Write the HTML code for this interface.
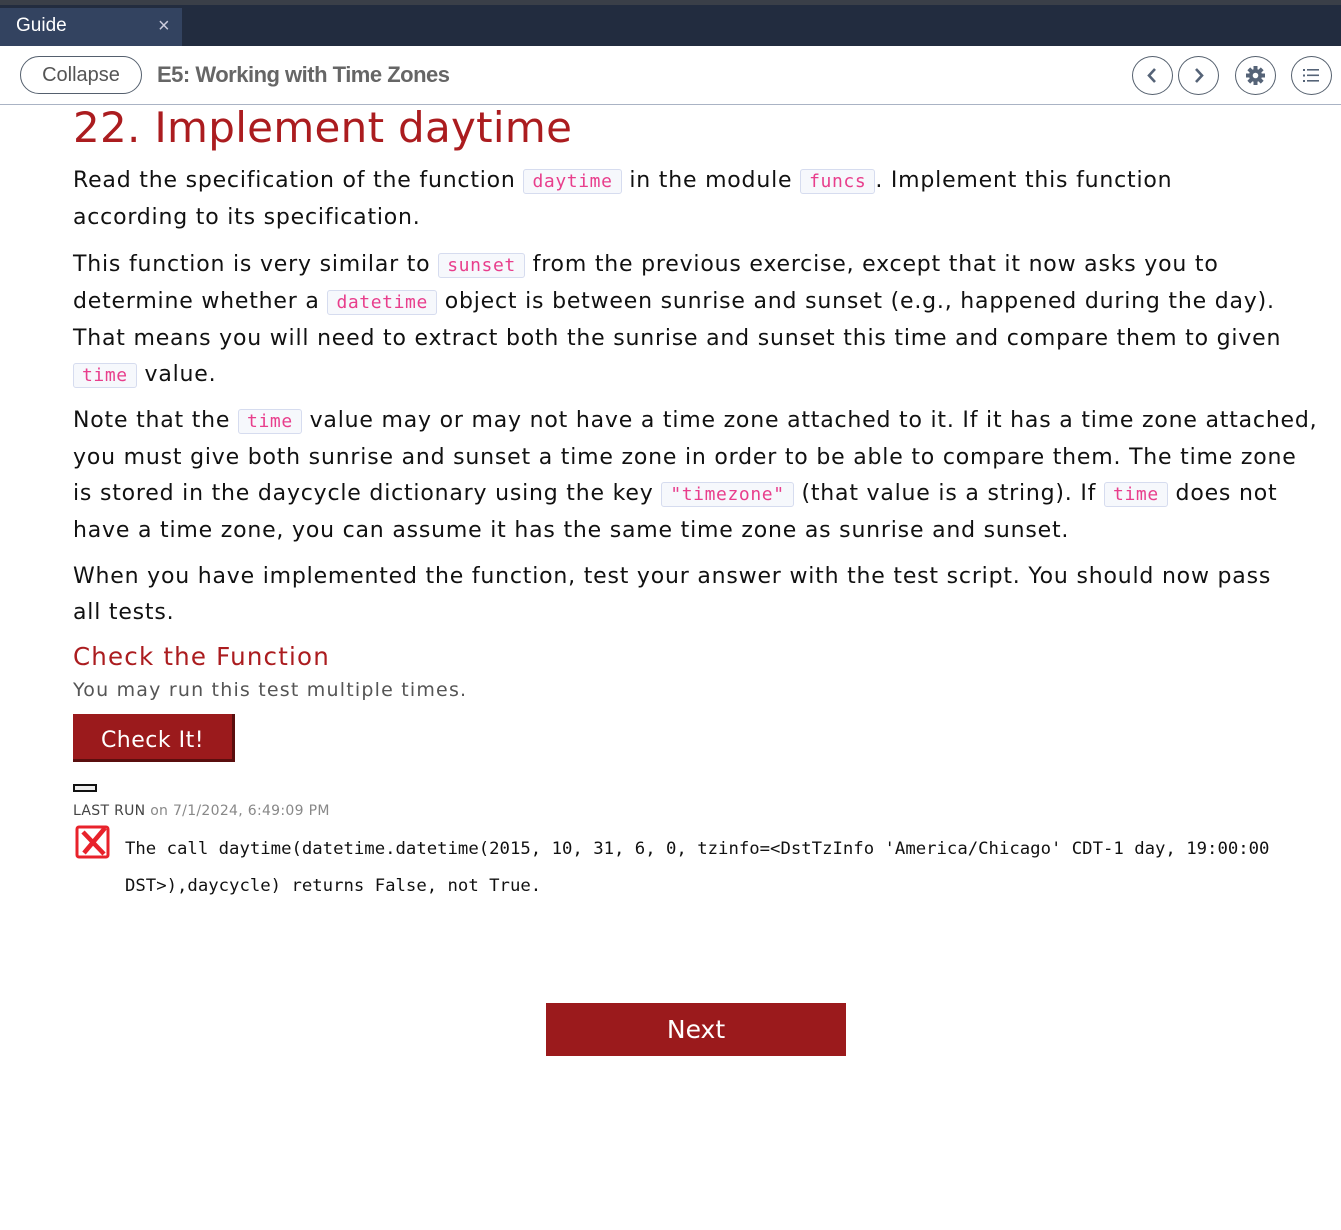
<!DOCTYPE html>
<html><head><meta charset="utf-8"><style>
body{margin:0;width:1341px;height:1230px;background:#fff;position:relative;overflow:hidden;font-family:"DejaVu Sans","Liberation Sans",sans-serif;color:#111}
.top{position:absolute;left:0;top:0;width:1341px;height:46px;background:#222c3f;border-top:5px solid #3a3f48;box-sizing:border-box}
.tab{position:absolute;left:0;top:8px;width:182px;height:38px;background:#334360;color:#fff;font-family:"Liberation Sans",sans-serif;font-size:19px;line-height:36px}
.tab span{position:absolute;left:16px}.tab b{position:absolute;left:158px;font-weight:normal;color:#ccd;font-size:20px}
.hdr{position:absolute;left:0;top:46px;width:1341px;height:58px;border-bottom:1px solid #aab3c4}
.col{position:absolute;left:20px;top:10px;width:120px;height:36px;border:1px solid #55606e;border-radius:19px;font-family:"Liberation Sans",sans-serif;font-size:20px;color:#555;text-align:center;line-height:36px}
.ttl{position:absolute;left:157px;top:16px;font-family:"Liberation Sans",sans-serif;font-weight:bold;font-size:22px;color:#666;letter-spacing:-0.5px}
.cb{position:absolute;top:10px;width:39px;height:37px;border:1px solid #55606e;border-radius:50%}
.cb svg{position:absolute;left:9px;top:8px}
h1{position:absolute;left:73px;top:103px;margin:0;font-weight:normal;font-size:42px;color:#ab1c1f;letter-spacing:0.3px}
.p{position:absolute;left:73px;font-size:22px;letter-spacing:0.8px;line-height:36px;white-space:nowrap;color:#111}
code{font-family:"DejaVu Sans Mono","Liberation Mono",monospace;font-size:18px;letter-spacing:0.6px;color:#e83e8c;background:#f6f8fc;border:1px solid #d6dcef;border-radius:3px;padding:1px 8px}
h2{position:absolute;left:73px;top:642px;margin:0;font-weight:normal;font-size:24.5px;letter-spacing:1.2px;color:#ab1c1f}
.sub{position:absolute;left:73px;top:679px;font-size:19px;letter-spacing:1.2px;color:#555}
.btn{position:absolute;left:73px;top:714px;width:159px;height:45px;background:#9b1a1c;border-right:3px solid #5a0e0e;border-bottom:3px solid #5a0e0e;color:#fff;font-size:22px;letter-spacing:0.5px;text-align:center;line-height:54px}
.bar{position:absolute;left:73px;top:784px;width:20px;height:4px;border:2px solid #111;background:#eee}
.lr{position:absolute;left:73px;top:803px;font-size:14px;letter-spacing:0.3px;color:#888}.lr span{color:#444}
.mono{position:absolute;left:125px;font-family:"DejaVu Sans Mono","Liberation Mono",monospace;font-size:17.3px;color:#111;white-space:nowrap}
.next{position:absolute;left:546px;top:1003px;width:300px;height:53px;background:#9b1a1c;color:#fff;font-size:25px;text-align:center;line-height:53px}
</style></head><body>
<div class="top"></div>
<div class="tab"><span>Guide</span><b>×</b></div>
<div class="hdr">
<div class="col">Collapse</div>
<div class="ttl">E5: Working with Time Zones</div>
<div class="cb" style="left:1132px"><svg width="21" height="21" viewBox="0 0 21 21"><path d="M13 4 L7 10.5 L13 17" stroke="#556377" stroke-width="2.6" fill="none"/></svg></div>
<div class="cb" style="left:1178px"><svg width="21" height="21" viewBox="0 0 21 21"><path d="M8 4 L14 10.5 L8 17" stroke="#556377" stroke-width="2.6" fill="none"/></svg></div>
<div class="cb" style="left:1235px"><svg width="21" height="21" viewBox="0 0 21 21"><g fill="#556377"><circle cx="10.5" cy="10.5" r="6.5"/><rect x="8.5" y="1" width="4" height="19"/><rect x="1" y="8.5" width="19" height="4"/><rect x="8.5" y="1" width="4" height="19" transform="rotate(45 10.5 10.5)"/><rect x="8.5" y="1" width="4" height="19" transform="rotate(-45 10.5 10.5)"/></g><circle cx="10.5" cy="10.5" r="2.8" fill="#fff"/></svg></div>
<div class="cb" style="left:1291px"><svg width="21" height="21" viewBox="0 0 21 21"><g fill="#556377"><rect x="2" y="4" width="2" height="2"/><rect x="2" y="9.5" width="2" height="2"/><rect x="2" y="15" width="2" height="2"/><rect x="6" y="4" width="12" height="1.6"/><rect x="6" y="9.5" width="12" height="1.6"/><rect x="6" y="15" width="12" height="1.6"/></g></svg></div>
</div>
<h1>22. Implement daytime</h1>
<div class="p" style="top:163px">Read the specification of the function <code>daytime</code> in the module <code>funcs</code>. Implement this function<br>according to its specification.</div>
<div class="p" style="top:247px">This function is very similar to <code>sunset</code> from the previous exercise, except that it now asks you to<br>determine whether a <code>datetime</code> object is between sunrise and sunset (e.g., happened during the day).<br>That means you will need to extract both the sunrise and sunset this time and compare them to given<br><code>time</code> value.</div>
<div class="p" style="top:403px">Note that the <code>time</code> value may or may not have a time zone attached to it. If it has a time zone attached,<br>you must give both sunrise and sunset a time zone in order to be able to compare them. The time zone<br>is stored in the daycycle dictionary using the key <code>"timezone"</code> (that value is a string). If <code>time</code> does not<br>have a time zone, you can assume it has the same time zone as sunrise and sunset.</div>
<div class="p" style="top:559px">When you have implemented the function, test your answer with the test script. You should now pass<br>all tests.</div>
<h2>Check the Function</h2>
<div class="sub">You may run this test multiple times.</div>
<div class="btn">Check It!</div>
<div class="bar"></div>
<div class="lr"><span>LAST RUN</span> on 7/1/2024, 6:49:09 PM</div>
<svg style="position:absolute;left:75px;top:824px" width="38" height="36" viewBox="0 0 38 36"><rect x="2" y="3" width="31" height="30" rx="2" fill="none" stroke="#e8222b" stroke-width="3"/><path d="M8 8 L29 30 M30 4 L9 29" stroke="#e8222b" stroke-width="4.5"/></svg>
<div class="mono" style="top:839px">The call daytime(datetime.datetime(2015, 10, 31, 6, 0, tzinfo=&lt;DstTzInfo 'America/Chicago' CDT-1 day, 19:00:00</div>
<div class="mono" style="top:876px">DST&gt;),daycycle) returns False, not True.</div>
<div class="next">Next</div>
</body></html>
